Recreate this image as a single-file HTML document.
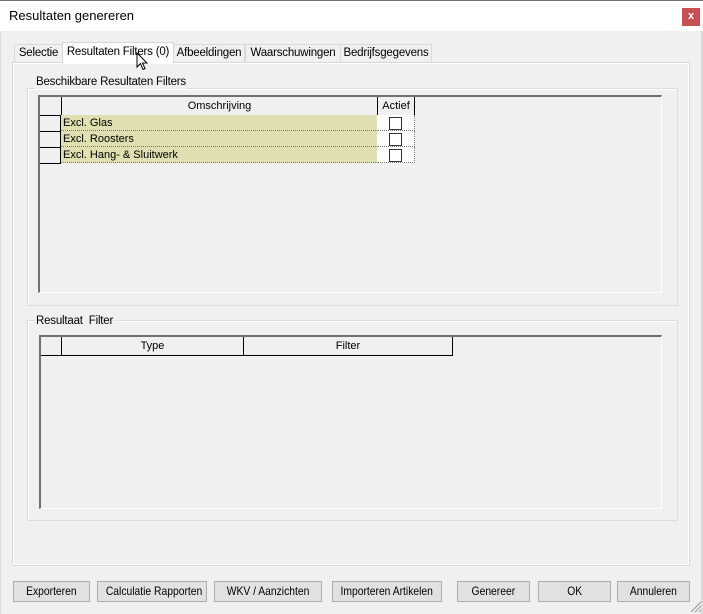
<!DOCTYPE html>
<html><head><style>
*{margin:0;padding:0;box-sizing:border-box}
body{width:703px;height:614px;overflow:hidden;background:#f0f0f0;font-family:"Liberation Sans",sans-serif;font-size:12px;color:#000;position:relative;white-space:nowrap}
.a{position:absolute}
.title{left:0;top:0;width:703px;height:31px;background:#fff;border-top:1px solid #707070}
.close{left:682px;top:8px;width:18px;height:18px;background:#c85050;color:#fff;font-weight:bold;font-size:11px;text-align:center;line-height:17px}
.tab{top:44px;height:18px;border:1px solid #d9d9d9;border-bottom:none;background:#f0f0f0;text-align:center;line-height:17px;font-size:11.5px;letter-spacing:-0.2px;overflow:hidden}
.panel{left:12px;top:62px;width:678px;height:504px;border:1px solid #d9d9d9;background:#f0f0f0}
.panel:before{content:"";position:absolute;left:0;top:0;right:0;bottom:0;border:1px solid #fff}
.grp{border:1px solid #dcdcdc;box-shadow:inset 1px 1px 0 #fff}
.lbl{background:#f0f0f0;padding:0 1px;line-height:13px;font-size:11.5px;letter-spacing:-0.2px}
.grid{border-top:2px solid #707070;border-left:2px solid #707070;border-right:1px solid #fff;border-bottom:1px solid #fff;background:#f0f0f0}
.c{position:absolute;border:1px solid #000;text-align:center;line-height:18px;font-size:11px}
.btn{top:581px;height:21px;background:#e1e1e1;border:1px solid #adadad;text-align:center;line-height:19px;font-size:12px;overflow:hidden}
.btn span{display:inline-block;transform:scaleX(.86)}
.row{position:absolute;height:16px;line-height:17px;font-size:11px}
.dot{border-bottom:1px dotted #777;border-right:1px dotted #777}
.cb{position:absolute;width:13px;height:13px;border:1px solid #333;background:#fff}
</style></head><body>
<div class="a title"></div>
<div class="a" style="left:9px;top:8px;font-size:13px">Resultaten genereren</div>
<div class="a close">x</div>
<div class="a" style="left:701px;top:31px;width:2px;height:583px;background:#dadada"></div>
<div class="a" style="left:0;top:31px;width:1px;height:583px;background:#dadada"></div>

<div class="a panel"></div>
<div class="a tab" style="left:14px;width:49px">Selectie</div>
<div class="a tab" style="left:62px;top:42px;height:21px;width:112px;background:#fff;line-height:18px">Resultaten Filters (0)</div>
<div class="a tab" style="left:173px;width:72px">Afbeeldingen</div>
<div class="a tab" style="left:245px;width:96px">Waarschuwingen</div>
<div class="a tab" style="left:340px;width:92px">Bedrijfsgegevens</div>
<svg class="a" style="left:136px;top:52px" width="14" height="20" viewBox="0 0 14 20"><path d="M1 1 L1 15 L4.5 11.5 L7 17.5 L9 16.7 L6.6 11 L11 11 Z" fill="#fff" stroke="#000" stroke-width="1"/></svg>

<div class="a grp" style="left:27px;top:88px;width:651px;height:218px"></div>
<div class="a lbl" style="left:35px;top:76px">Beschikbare Resultaten Filters</div>
<div class="a grid" style="left:38px;top:95px;width:624px;height:198px"></div>
<div class="c" style="left:40px;top:97px;width:22px;height:19px;border-left:none;border-top:none"></div>
<div class="c" style="left:61px;top:97px;width:317px;height:19px;border-top:none">Omschrijving</div>
<div class="c" style="left:377px;top:97px;width:38px;height:19px;border-top:none">Actief</div>
<div class="row" style="left:40px;top:115px;width:21px;height:17px;border-right:1px solid #000;border-bottom:1px solid #000"></div>
<div class="row" style="left:40px;top:131px;width:21px;height:17px;border-right:1px solid #000;border-bottom:1px solid #000"></div>
<div class="row" style="left:40px;top:147px;width:21px;height:17px;border-right:1px solid #000;border-bottom:1px solid #000"></div>
<div class="row dot" style="left:61px;top:115px;width:317px;background:#e0dfb1;padding-left:2px">Excl. Glas</div>
<div class="row dot" style="left:61px;top:131px;width:317px;background:#e0dfb1;padding-left:2px">Excl. Roosters</div>
<div class="row dot" style="left:61px;top:147px;width:317px;background:#e0dfb1;padding-left:2px">Excl. Hang- &amp; Sluitwerk</div>
<div class="row dot" style="left:377px;top:115px;width:38px;background:#fff"></div>
<div class="row dot" style="left:377px;top:131px;width:38px;background:#fff"></div>
<div class="row dot" style="left:377px;top:147px;width:38px;background:#fff"></div>
<div class="cb" style="left:389px;top:117px"></div>
<div class="cb" style="left:389px;top:133px"></div>
<div class="cb" style="left:389px;top:149px"></div>

<div class="a grp" style="left:27px;top:320px;width:651px;height:201px"></div>
<div class="a lbl" style="left:35px;top:315px">Resultaat&nbsp; Filter</div>
<div class="a grid" style="left:39px;top:335px;width:623px;height:174px"></div>
<div class="c" style="left:41px;top:337px;width:21px;height:19px;border-left:none;border-top:none"></div>
<div class="c" style="left:61px;top:337px;width:183px;height:19px;border-top:none">Type</div>
<div class="c" style="left:243px;top:337px;width:210px;height:19px;border-top:none">Filter</div>

<div class="a btn" style="left:13px;width:77px"><span>Exporteren</span></div>
<div class="a btn" style="left:97px;width:110px"><span>Calculatie Rapporten</span></div>
<div class="a btn" style="left:214px;width:108px"><span>WKV / Aanzichten</span></div>
<div class="a btn" style="left:332px;width:110px"><span>Importeren Artikelen</span></div>
<div class="a btn" style="left:457px;width:73px"><span>Genereer</span></div>
<div class="a btn" style="left:538px;width:73px"><span>OK</span></div>
<div class="a btn" style="left:617px;width:73px"><span>Annuleren</span></div>
<svg class="a" style="left:690px;top:601px" width="12" height="12"><path d="M11 1 L1 11 M11 5 L5 11 M11 9 L9 11" stroke="#999" stroke-width="1"/></svg>
</body></html>
